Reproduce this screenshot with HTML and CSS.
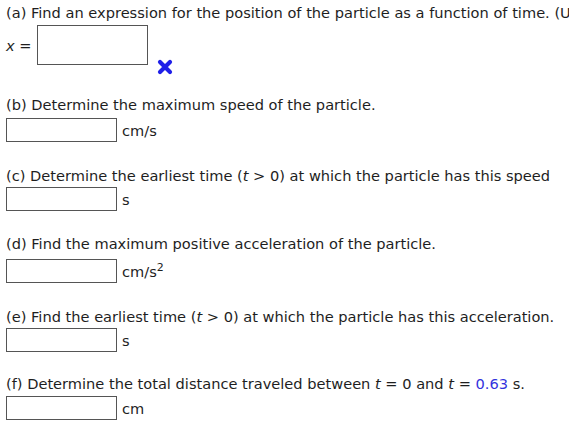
FILE: index.html
```html
<!DOCTYPE html>
<html>
<head>
<meta charset="utf-8">
<link rel="stylesheet" href="styles.css">
</head>
<body>
<div class="page">
  <section class="part part-a">
    <p class="prompt">(a) Find an expression for the position of the particle as a function of time. (Use the following as necessary: <i>t</i>.)</p>
    <div class="answer-a">
      <span class="var"><i>x</i> =</span>
      <span class="box box-large"></span>
      <svg class="wrong" width="16" height="16" viewBox="0 0 16 16"><path d="M3 3 L13 13 M13 3 L3 13" stroke="#1f1fe8" stroke-width="4.2" stroke-linecap="round"/></svg>
    </div>
  </section>
  <section class="part part-b">
    <p class="prompt">(b) Determine the maximum speed of the particle.</p>
    <div class="answer"><span class="box"></span><span class="unit">cm/s</span></div>
  </section>
  <section class="part part-c">
    <p class="prompt">(c) Determine the earliest time (<i>t</i> &gt; 0) at which the particle has this speed</p>
    <div class="answer"><span class="box"></span><span class="unit">s</span></div>
  </section>
  <section class="part part-d">
    <p class="prompt">(d) Find the maximum positive acceleration of the particle.</p>
    <div class="answer"><span class="box"></span><span class="unit">cm/s<sup>2</sup></span></div>
  </section>
  <section class="part part-e">
    <p class="prompt">(e) Find the earliest time (<i>t</i> &gt; 0) at which the particle has this acceleration.</p>
    <div class="answer"><span class="box"></span><span class="unit">s</span></div>
  </section>
  <section class="part part-f">
    <p class="prompt">(f) Determine the total distance traveled between <i>t</i> = 0 and <i>t</i> = <span class="given">0.63</span> s.</p>
    <div class="answer"><span class="box"></span><span class="unit">cm</span></div>
  </section>
</div>
</body>
</html>
```
FILE: styles.css
```css
html, body {
  margin: 0;
  padding: 0;
  background: #ffffff;
  overflow: hidden;
}
.page {
  font-family: "DejaVu Sans", Verdana, sans-serif;
  font-size: 14.6px;
  color: #1e1e1e;
  padding: 3px 0 0 6px;
  white-space: nowrap;
  width: 563px;
  overflow: hidden;
}
.prompt {
  margin: 0;
  line-height: 20px;
}
.answer-a {
  display: flex;
  align-items: center;
  margin-top: 2px;
}
.var {
  margin-right: 5px;
}
.box {
  display: inline-block;
  flex: none;
  width: 109px;
  height: 22px;
  border: 1px solid #555555;
  background: #fff;
}
.box-large {
  height: 38px;
}
.wrong {
  align-self: flex-end;
  margin: 0 0 -10px 9px;
}
.answer {
  display: flex;
  align-items: center;
}
.unit {
  margin-left: 5px;
}
sup {
  font-size: 11px;
  line-height: 0;
  vertical-align: 6px;
}
.part-b { margin-top: 30px; }
.part-b .answer { margin-top: 3px; }
.part-c { margin-top: 24px; }
.part-c .answer { margin-top: 1px; }
.part-d { margin-top: 23px; }
.part-d .answer { margin-top: 5px; }
.part-e { margin-top: 24px; }
.part-e .answer { margin-top: 1px; }
.part-f { margin-top: 22px; }
.part-f .answer { margin-top: 2px; }
.given { color: #3333dd; }
```
